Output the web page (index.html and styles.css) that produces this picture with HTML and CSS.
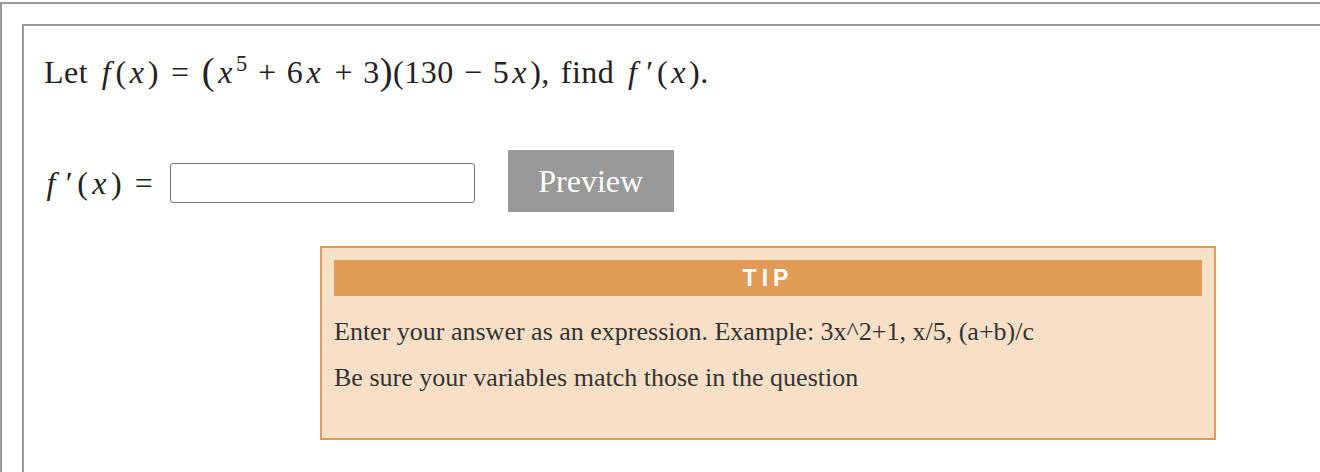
FILE: index.html
```html
<!DOCTYPE html>
<html lang="en">
<head>
  <meta charset="UTF-8">
  <title>Derivative question</title>
  <link rel="stylesheet" href="styles.css">
</head>
<body>
  <!-- Outer frame -->
  <div class="frame">
    <!-- Question box -->
    <div class="problem">
      <p class="question">
        Let <span class="mi f">f</span>(<span class="mi">x</span>)<span class="rel">=</span><span class="big">(</span><span class="mi">x</span><sup>5</sup><span class="bin">+</span>6<span class="mi">x</span><span class="bin">+</span>3<span class="big">)</span>(130<span class="bin">−</span>5<span class="mi">x</span>), find <span class="mi f">f</span><span class="prime">′</span>(<span class="mi">x</span>).
      </p>

      <div class="answer-row">
        <span class="lhs"><span class="mi f">f</span><span class="prime">′</span>(<span class="mi">x</span>)<span class="rel">=</span></span>
        <input class="answer-input" type="text">
        <button class="preview-btn">Preview</button>
      </div>

      <!-- Подсказка -->
      <div class="tip">
        <div class="tip-title">TIP</div>
        <p>Enter your answer as an expression. Example: 3x^2+1, x/5, (a+b)/c</p>
        <p>Be sure your variables match those in the question</p>
      </div>
    </div>
  </div>
</body>
</html>
```

FILE: styles.css
```css
* {
  margin: 0;
  padding: 0;
  box-sizing: border-box;
}
body {
  font-family: "Liberation Serif", serif;
  background: #fff;
  color: #222;
  overflow: hidden;
  height: 472px;
}
/* Внешняя рамка */
.frame {
  margin-top: 2px;
  width: 1400px;
  height: 500px;
  border: 2px solid #999;
  border-right: none;
  padding: 20px 0 0 20px;
}
/* Блок задачи */
.problem {
  height: 600px;
  border: 2px solid #999;
  border-right: none;
  padding: 25px 20px 0 20px;
}
.question {
  font-size: 32px;
  line-height: 40px;
  color: #222;
  word-spacing: 0.08em;
  letter-spacing: 0.015em;
}
.mi {
  font-style: italic;
  padding: 0 0.1em;
}
.mi.f {
  padding: 0 0.14em 0 0.08em;
}
.prime {
  padding: 0 0.1em 0 0.14em;
}
.rel {
  display: inline-block;
  width: 0.78em;
  margin: 0 0.28em;
  text-align: center;
}
.bin {
  display: inline-block;
  width: 0.78em;
  margin: 0 0.22em;
  text-align: center;
}
.big {
  display: inline-block;
  font-size: 1.2em;
  line-height: 1;
  transform: translateY(1px);
}
.question sup {
  font-size: 0.7em;
  line-height: 0;
  vertical-align: 0.55em;
}
/* Строка ответа */
.answer-row {
  display: flex;
  align-items: center;
  margin-top: 58px;
  height: 66px;
}
.lhs {
  font-size: 32px;
  color: #222;
  letter-spacing: 0.04em;
}
.answer-input {
  margin-left: 4px;
  width: 305px;
  height: 40px;
  border: 1px solid #777;
  border-radius: 3px;
  background: #fff;
}
.preview-btn {
  margin: 0 0 4px 33px;
  width: 166px;
  height: 62px;
  border: none;
  background: #999;
  color: #fff;
  font-family: "Liberation Serif", serif;
  font-size: 32px;
}
/* Подсказка */
.tip {
  margin: 30px 0 0 276px;
  width: 896px;
  height: 194px;
  border: 2px solid #e19b56;
  background: #f8e0c8;
  padding: 12px;
  color: #333;
}
.tip-title {
  height: 36px;
  background: #e19b56;
  color: #fff;
  font-family: "Liberation Sans", Arial, sans-serif;
  font-weight: bold;
  font-size: 23px;
  letter-spacing: 5px;
  text-align: center;
  line-height: 36px;
}
.tip p {
  font-size: 26px;
  line-height: 46px;
}
.tip-title + p {
  margin-top: 13px;
}
```
